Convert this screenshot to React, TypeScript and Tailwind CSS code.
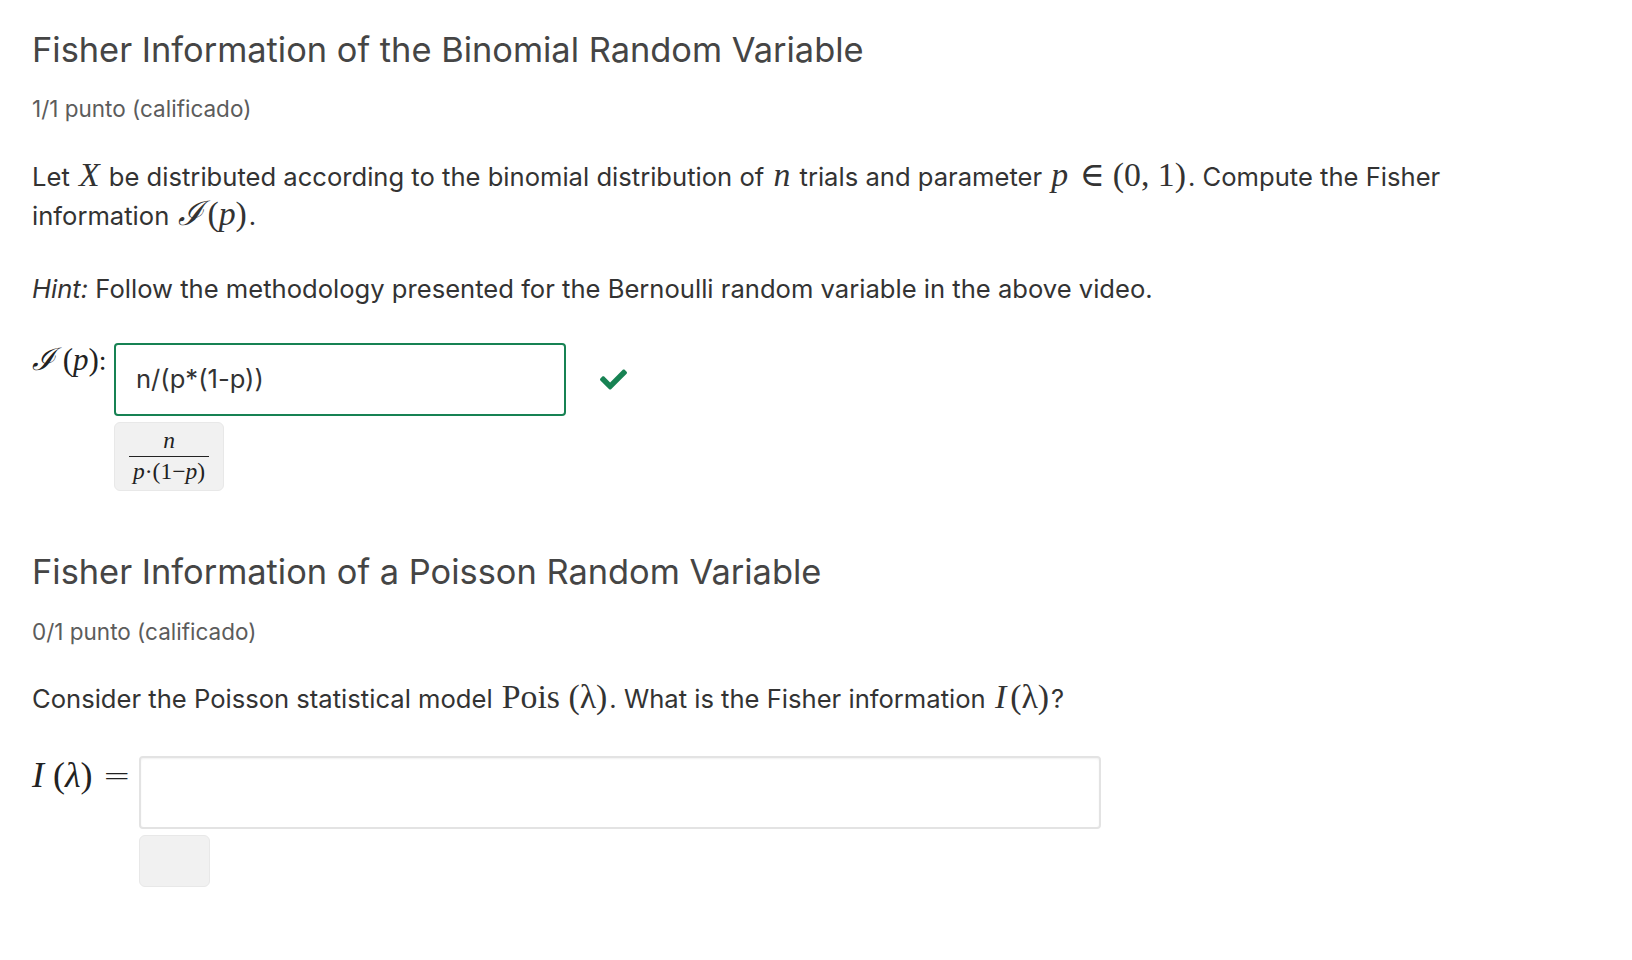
import React from 'react';
import { FaCheck } from 'react-icons/fa';

const serif = "font-['Liberation_Serif','DejaVu_Serif',serif]";

// inline math token
const M: React.FC<{ children: React.ReactNode; italic?: boolean; className?: string }> = ({
  children,
  italic = true,
  className = '',
}) => (
  <span className={`${serif} ${italic ? 'italic' : ''} inline-block text-[1.32em] leading-[1] mx-[2px] ${className}`}>
    {children}
  </span>
);

const Fraction: React.FC = () => (
  <div className={`${serif} flex flex-col items-center text-[23.5px] leading-none text-[#222]`}>
    <span className="italic pb-[3px]">n</span>
    <span className="block h-[1.5px] w-[80px] bg-[#222]" />
    <span className="pt-[3px]">
      <i>p</i>·(1−<i>p</i>)
    </span>
  </div>
);

export default function App() {
  return (
    <div className="min-h-screen bg-white font-['Inter',sans-serif] text-[#454545] px-8 pt-[28px]">
      <div className="max-w-[1490px]">
        <h2 className="text-[34.4px] leading-[44px] font-normal">Fisher Information of the Binomial Random Variable</h2>
        <div className="mt-[23px] text-[22.5px] leading-[28px] text-[#5c5c5c]">1/1 punto (calificado)</div>

        <p className="mt-[34px] text-[25.6px] leading-[39px] text-[#333]">
          Let <M>X</M> be distributed according to the binomial distribution of <M>n</M> trials and parameter{' '}
          <M>p</M> <M italic={false}>∈ (0, 1)</M>
          <span>. Compute the Fisher</span> <span>information</span> <M>ℐ</M>
          <M italic={false}>
            (<i>p</i>)
          </M>
          <span>.</span>
        </p>

        <p className="mt-[34px] text-[25.6px] leading-[39px] text-[#333]">
          <em>Hint:</em> Follow the methodology presented for the Bernoulli random variable in the above video.
        </p>

        <div className="mt-[35px] flex items-start">
          <div className={`${serif} w-[74px] pt-[2px] text-[31px] leading-[30px] text-[#222] whitespace-nowrap`}>
            <i>ℐ</i> (<i>p</i>)<span className="font-['Inter',sans-serif] text-[25px]">:</span>
          </div>
          <div className="ml-[8px] flex flex-col">
            <div className="flex items-center">
              <div className="w-[452px] h-[73px] border-2 border-[#178253] rounded-[4px] flex items-center pl-[20px] text-[25.6px] text-[#333]">
                n/(p*(1-p))
              </div>
              <FaCheck className="ml-[34px] text-[#178253]" size={27} />
            </div>
            <div className="mt-[6px] w-[110px] h-[69px] bg-[#f1f1f1] border border-[#e8e8e8] rounded-[6px] flex items-center justify-center">
              <Fraction />
            </div>
          </div>
        </div>

        <h2 className="mt-[59px] text-[34.4px] leading-[44px] font-normal">Fisher Information of a Poisson Random Variable</h2>
        <div className="mt-[24px] text-[22.5px] leading-[28px] text-[#5c5c5c]">0/1 punto (calificado)</div>

        <p className="mt-[33px] text-[25.6px] leading-[39px] text-[#333]">
          Consider the Poisson statistical model <M italic={false}>Pois (λ)</M>. What is the Fisher information{' '}
          <M>I</M>
          <M italic={false}>(λ)</M>?
        </p>

        <div className="mt-[38px] flex items-start">
          <div className={`${serif} w-[98px] pt-[1px] text-[36px] leading-[36px] text-[#222] whitespace-nowrap`}>
            <i>I</i> (<i>λ</i>)
            <span className="ml-[10px] font-['DejaVu_Sans',sans-serif] font-light text-[34px]">=</span>
          </div>
          <div className="ml-[9px] flex flex-col">
            <div className="w-[962px] h-[73px] border-2 border-[#e3e3e3] rounded-[4px] shadow-[inset_0_1px_2px_rgba(0,0,0,0.06)] bg-white" />
            <div className="mt-[6px] w-[71px] h-[52px] bg-[#f1f1f1] border border-[#e8e8e8] rounded-[6px]" />
          </div>
        </div>
      </div>
    </div>
  );
}
